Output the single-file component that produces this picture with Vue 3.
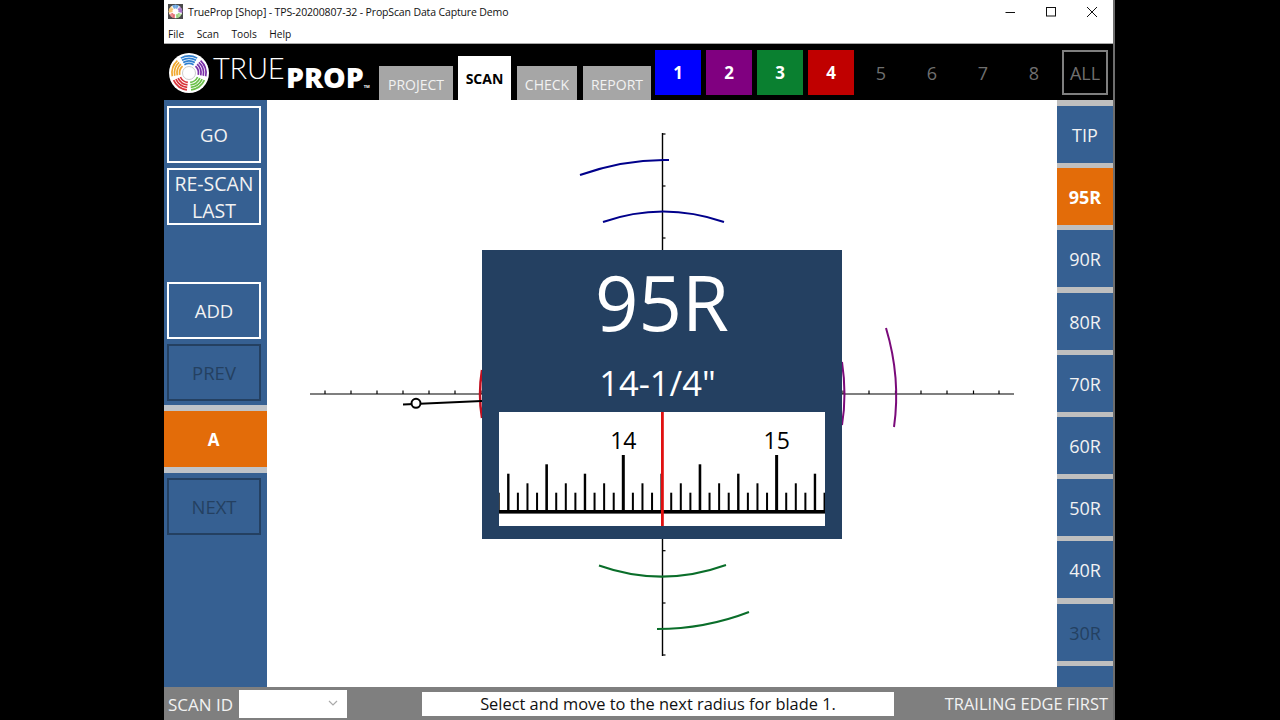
<script setup>
const blades = [
  { n: '1', c: 'b-blue' }, { n: '2', c: 'b-purple' }, { n: '3', c: 'b-green' }, { n: '4', c: 'b-red' },
  { n: '5', c: '' }, { n: '6', c: '' }, { n: '7', c: '' }, { n: '8', c: '' }
]
const radii = [
  { t: 'TIP', c: '' }, { t: '95R', c: 'active' }, { t: '90R', c: '' }, { t: '80R', c: '' },
  { t: '70R', c: '' }, { t: '60R', c: '' }, { t: '50R', c: '' }, { t: '40R', c: '' }, { t: '30R', c: 'off' }
]

// ruler ticks: 1/16 inch steps
const ticks = []
for (let k = -13; k <= 21; k++) {
  const m = ((k % 16) + 16) % 16
  let top = 80.7, w = 2
  if (m === 0) { top = 43; w = 3 }
  else if (m === 8) { top = 52.3; w = 2.6 }
  else if (m % 4 === 0) { top = 61.7; w = 2.4 }
  else if (m % 2 === 0) { top = 71.3 }
  ticks.push({ x: 124.3 + k * 9.583, top, w })
}

const hTicks = [325, 351, 377, 403, 429, 455, 481, 843, 869, 895.5, 921, 947, 973.5, 999]
const vTicks = [134, 186, 238, 550.7, 603, 655]

// logo arcs
const colors = ['#2f7fd0', '#7a2fa8', '#6cc04a', '#d8343a', '#f0a830']
const logoArcs = []
colors.forEach((color, i) => {
  const mid = -90 + i * 72
  ;[9.5, 12, 14.5, 17].forEach(r => {
    const a0 = (mid - 29) * Math.PI / 180
    const a1 = (mid + 29) * Math.PI / 180
    const p = (a) => `${(20 + r * Math.cos(a)).toFixed(2)} ${(20 + r * Math.sin(a)).toFixed(2)}`
    logoArcs.push({ d: `M${p(a0)}A${r} ${r} 0 0 1 ${p(a1)}`, color })
  })
})
</script>

<template>
  <div class="window">
    <div class="titlebar">
      <svg class="app-icon" viewBox="0 0 40 40">
        <rect width="40" height="40" fill="#4a4a4a" />
        <circle cx="20" cy="20" r="18" fill="#fff" />
        <path v-for="(a, i) in logoArcs" :key="i" :d="a.d" :stroke="a.color" stroke-width="2" fill="none" />
      </svg>
      <span class="title">TrueProp [Shop] - TPS-20200807-32 - PropScan Data Capture Demo</span>
      <div class="win-controls">
        <svg width="12" height="12" viewBox="0 0 12 12"><path d="M1.500 6.500h9.500" stroke="#111" stroke-width="1" fill="none" /></svg>
        <svg width="12" height="12" viewBox="0 0 12 12"><rect x="1.500" y="1.500" width="9" height="8.500" stroke="#111" stroke-width="1" fill="none" /></svg>
        <svg width="12" height="12" viewBox="0 0 12 12"><path d="M1 1l10 10M11 1L1 11" stroke="#111" stroke-width="1" fill="none" /></svg>
      </div>
    </div>
    <div class="menubar">
      <span>File</span><span>Scan</span><span>Tools</span><span>Help</span>
    </div>

    <div class="header">
      <div class="logo">
        <svg class="logo-mark" width="40" height="40" viewBox="0 0 40 40">
          <circle cx="20" cy="20" r="20" fill="#fff" />
          <path v-for="(a, i) in logoArcs" :key="i" :d="a.d" :stroke="a.color" stroke-width="1.700" fill="none" />
          <circle cx="20" cy="20" r="6.500" fill="#fff" stroke="#ccc" stroke-width="1" />
        </svg>
        <span class="logo-true">TRUE</span>
        <span class="logo-prop">PROP</span>
        <span class="logo-tm">TM</span>
      </div>
      <div class="tabs">
        <div class="tab">PROJECT</div>
        <div class="tab current">SCAN</div>
        <div class="tab">CHECK</div>
        <div class="tab">REPORT</div>
      </div>
      <div class="blades">
        <div v-for="b in blades" :key="b.n" class="blade" :class="b.c">{{ b.n }}</div>
        <div class="blade all">ALL</div>
      </div>
    </div>

    <div class="main">
      <aside class="left">
        <button class="side-btn">GO</button>
        <button class="side-btn two">RE-SCAN<br />LAST</button>
        <div class="spacer"></div>
        <button class="side-btn">ADD</button>
        <button class="side-btn off">PREV</button>
        <div class="side-band">A</div>
        <button class="side-btn off">NEXT</button>
      </aside>

      <div class="canvas">
        <svg class="plot" width="790" height="587" viewBox="267 100 790 587">
          <g stroke="#000" stroke-width="1.200" fill="none">
            <path d="M310 394H1014" />
            <path d="M662.500 133V656" stroke-width="1.400" />
            <path v-for="x in hTicks" :key="x" :d="`M${x} 394v-3.500`" />
            <path v-for="y in vTicks" :key="y" :d="`M662.500 ${y}h3`" />
          </g>
          <g fill="none" stroke-width="2">
            <path d="M580 175Q625 159 669 160" stroke="#00008b" />
            <path d="M603 222Q663 201 724 222" stroke="#00008b" />
            <path d="M599 565.500Q662 588 726 565" stroke="#0a6e2a" />
            <path d="M657 629Q705 629 749 612" stroke="#0a6e2a" />
            <path d="M886 328Q901 378 894 427" stroke="#7a0a7a" />
            <path d="M842 362Q847 395 842 425" stroke="#7a0a7a" />
            <path d="M482 370Q478 395 482 418" stroke="#c01020" stroke-width="2.500" />
          </g>
          <path d="M403 404.500L482 401" stroke="#000" stroke-width="2" fill="none" />
          <circle cx="416" cy="403.300" r="4.500" stroke="#000" stroke-width="2" fill="#fff" />
        </svg>

        <div class="dial">
          <div class="dial-title">95R</div>
          <div class="dial-size">14-1/4"</div>
          <svg class="ruler" width="326" height="114" viewBox="0 0 326 114">
            <rect width="326" height="114" fill="#fff" />
            <text x="124.300" y="37" class="rule-num">14</text>
            <text x="277.700" y="37" class="rule-num">15</text>
            <rect v-for="(t, i) in ticks" :key="i" :x="t.x - t.w / 2" :y="t.top" :width="t.w" :height="99 - t.top" fill="#000" />
            <rect x="0" y="98" width="326" height="3.600" fill="#000" />
            <rect x="162" y="0" width="2.800" height="114" fill="#e01010" />
          </svg>
        </div>
      </div>

      <aside class="right">
        <div class="band first"></div>
        <template v-for="r in radii" :key="r.t">
          <div class="radius" :class="r.c">{{ r.t }}</div>
          <div class="band"></div>
        </template>
      </aside>
    </div>

    <div class="footer">
      <span class="scan-label">SCAN ID</span>
      <div class="scan-select">
        <svg width="10" height="7" viewBox="0 0 10 7"><path d="M1 1l4 4 4-4" stroke="#aaa" stroke-width="1.200" fill="none" /></svg>
      </div>
      <div class="message">Select and move to the next radius for blade 1.</div>
      <span class="edge">TRAILING EDGE FIRST</span>
    </div>
  </div>
</template>

<style>
html, body { margin: 0; background: #000; }
</style>

<style scoped>
.window {
  box-sizing: content-box;
  width: 949px;
  height: 720px;
  margin-left: 164px;
  border-right: 2px solid #6e6e6e;
  display: flex;
  flex-direction: column;
  overflow: hidden;
  font-family: "Open Sans", "Noto Sans", sans-serif;
  background: #fff;
}
.titlebar {
  height: 24px;
  display: flex;
  align-items: center;
  padding-left: 4px;
  color: #111;
}
.app-icon { width: 15px; height: 15px; margin-top: -1px; }
.title { font-size: 10.500px; margin-left: 5px; margin-top: -1px; letter-spacing: -0.140px; }
.win-controls {
  margin-left: auto;
  display: flex;
  gap: 29px;
  padding-right: 15px;
  margin-top: -1px;
}
.menubar {
  height: 19px;
  display: flex;
  align-items: center;
  gap: 12.500px;
  padding-left: 4px;
  font-size: 10.200px;
  color: #111;
  border-bottom: 1px solid #a8a8a8;
  box-sizing: content-box;
}
.header {
  height: 56px;
  background: #000;
  display: flex;
  align-items: flex-end;
  flex: none;
}
.logo {
  width: 215px;
  height: 56px;
  flex: none;
  display: flex;
  align-items: flex-start;
  color: #fff;
}
.logo-mark { margin: 9px 0 0 5px; flex: none; }
.logo-true {
  font-family: "Lato", "Open Sans", sans-serif;
  font-weight: 300;
  font-size: 29px;
  line-height: 30px;
  margin: 9px 0 0 4px;
  width: 73px;
  letter-spacing: -0.200px;
}
.logo-prop {
  font-weight: 800;
  font-size: 28.500px;
  line-height: 30px;
  margin-top: 18px;
  letter-spacing: -0.100px;
}
.logo-tm { font-size: 4px; line-height: 6px; margin: 40px 0 0 0; font-weight: 700; }
.tabs { display: flex; align-items: flex-end; gap: 5px; height: 100%; flex: none; }
.tab {
  height: 34px;
  width: 74px;
  background: #a6a6a6;
  color: #f2f2f2;
  font-size: 14px;
  display: flex;
  align-items: center;
  justify-content: center;
  padding-top: 3px;
  box-sizing: border-box;
}
.tab:nth-child(2) { width: 53px; }
.tab:nth-child(3) { width: 60px; margin-left: 1px; }
.tab:nth-child(4) { width: 68px; margin-left: 1px; }
.tab.current {
  height: 44px;
  background: #fff;
  color: #000;
  font-weight: 700;
  font-size: 14px;
  padding-top: 0;
  padding-bottom: 0;
}
.blades {
  display: flex;
  gap: 5px;
  margin-left: 4px;
  align-self: flex-start;
  margin-top: 6px;
}
.blade {
  width: 46px;
  height: 45px;
  display: flex;
  align-items: center;
  justify-content: center;
  font-size: 17px;
  font-weight: 700;
  color: #fff;
  box-sizing: border-box;
}
.blade:nth-child(5) { margin-left: -1px; }
.blade:not(.b-blue):not(.b-purple):not(.b-green):not(.b-red) {
  color: #6f6f6f;
  font-weight: 400;
  font-size: 18px;
}
.b-blue { background: #0000ff; }
.b-purple { background: #800080; }
.b-green { background: #0a8030; }
.b-red { background: #c00000; }
.blade.all {
  border: 2px solid #7f7f7f;
  color: #7f7f7f;
  font-weight: 400;
  font-size: 19px;
}
.main { height: 587px; display: flex; flex: none; }
.left {
  width: 103px;
  flex: none;
  background: #366092;
  padding-top: 6px;
  box-sizing: border-box;
  display: flex;
  flex-direction: column;
  gap: 5px;
}
.side-btn {
  width: 94px;
  height: 57px;
  margin-left: 3px;
  box-sizing: border-box;
  border: 2px solid #fff;
  background: transparent;
  color: #f2f2f2;
  font-family: inherit;
  font-size: 18.500px;
  padding: 0;
  line-height: 27px;
  flex: none;
}
.side-btn.two { font-size: 19.500px; }
.side-btn.off { border-color: #244061; color: #244061; }
.spacer { height: 47px; flex: none; }
.side-band {
  height: 56px;
  flex: none;
  margin-top: -1px;
  background: #e36c09;
  border-top: 6px solid #bfc3c8;
  border-bottom: 6px solid #bfc3c8;
  box-sizing: content-box;
  color: #fff;
  font-weight: 700;
  font-size: 17px;
  display: flex;
  align-items: center;
  justify-content: center;
  padding-right: 4px;
}
.canvas { width: 790px; flex: none; position: relative; background: #fff; }
.plot { display: block; }
.dial {
  position: absolute;
  left: 215px;
  top: 150px;
  width: 360px;
  height: 289px;
  box-sizing: border-box;
  background: #244061;
  color: #fff;
  text-align: center;
  padding: 0 17px;
  display: flex;
  flex-direction: column;
}
.dial-title { font-size: 76px; line-height: 104px; height: 104px; }
.dial-size { font-size: 34.500px; line-height: 58px; height: 58px; padding-right: 9px; }
.ruler { display: block; flex: none; }
.rule-num {
  font-family: "Open Sans", "Noto Sans", sans-serif;
  font-size: 23px;
  text-anchor: middle;
  fill: #000;
}
.right {
  width: 56px;
  flex: none;
  background: #366092;
  display: flex;
  flex-direction: column;
}
.band { height: 5.200px; flex: none; background: #bfbfbf; }
.band.first { height: 6px; }
.radius {
  height: 57px;
  flex: none;
  display: flex;
  align-items: center;
  justify-content: center;
  padding-top: 1px;
  box-sizing: border-box;
  color: #f2f2f2;
  font-size: 18px;
}
.radius.active { background: #e36c09; color: #fff; font-weight: 700; }
.radius.off { color: #244061; }
.footer {
  flex: 1;
  background: #7f7f7f;
  display: flex;
  align-items: center;
  color: #f2f2f2;
  font-size: 16.400px;
}
.scan-label { margin-left: 4px; width: 71px; flex: none; font-size: 17px; padding-top: 1px; }
.scan-select {
  width: 108px;
  height: 28px;
  background: #fff;
  flex: none;
  display: flex;
  align-items: center;
  justify-content: flex-end;
  padding-right: 9px;
  box-sizing: border-box;
}
.message {
  width: 472px;
  height: 24px;
  margin-left: 75px;
  background: #fff;
  color: #111;
  display: flex;
  align-items: center;
  justify-content: center;
  flex: none;
}
.edge { margin-left: auto; padding-right: 5px; }
</style>
